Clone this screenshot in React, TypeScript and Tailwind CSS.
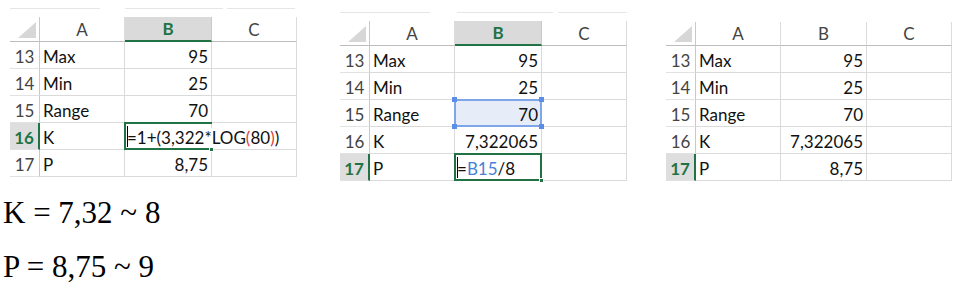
import React from 'react';

type Kind = 'plain' | 'editOverflow' | 'edit' | 'ref';
type Row = { n: number; a: string; b: React.ReactNode; kind?: Kind };

const RED = 'text-[#e0413c]';
const BLUE = 'text-[#4a7fd8]';

function Corner() {
  return (
    <div className="flex w-[30px] items-end justify-end border-r border-b border-r-[#c9c9c9] border-b-[#bdbdbd] pr-[3px] pb-[3px]">
      <svg width="18" height="16" viewBox="0 0 18 16">
        <polygon points="18,0 18,16 0,16" fill="#d7d7d7" />
      </svg>
    </div>
  );
}

function HeaderCell({ label, width, selected }: { label: string; width: string; selected?: boolean }) {
  return (
    <div
      className={`flex items-end justify-center pb-[2px] text-[17px] leading-[18px] ${width} ${
        selected
          ? 'border-r border-r-[#c9c9c9] border-b-2 border-b-[#217346] bg-[#dadada] font-bold text-[#217346]'
          : 'border-r border-b border-r-[#dcdcdc] border-b-[#bdbdbd] text-[#444]'
      }`}
    >
      {label}
    </div>
  );
}

function EditBox({ open }: { open?: boolean }) {
  return (
    <>
      <div
        className={`pointer-events-none absolute -top-px -right-px -bottom-px -left-px z-20 border-2 border-[#217346] ${
          open ? 'border-r-0' : ''
        }`}
      />
      <div className="absolute -right-[3px] -bottom-[3px] z-30 h-[5px] w-[5px] border border-white bg-[#217346]" />
      <div className="absolute top-[3px] left-[2px] z-30 h-[21px] w-px bg-black" />
    </>
  );
}

function RefBox() {
  return (
    <>
      <div className="pointer-events-none absolute -top-px -right-px -bottom-px -left-px z-20 border-2 border-[#7ea5e8]" />
      <div className="absolute -top-[3px] -left-[3px] z-30 h-[5px] w-[5px] bg-[#5b8ee6]" />
      <div className="absolute -top-[3px] -right-[3px] z-30 h-[5px] w-[5px] bg-[#5b8ee6]" />
      <div className="absolute -bottom-[3px] -left-[3px] z-30 h-[5px] w-[5px] bg-[#5b8ee6]" />
      <div className="absolute -right-[3px] -bottom-[3px] z-30 h-[5px] w-[5px] bg-[#5b8ee6]" />
    </>
  );
}

function Sheet({
  rows,
  selRow,
  selColB,
  headerH,
  colB,
}: {
  rows: Row[];
  selRow: number;
  selColB?: boolean;
  headerH: string;
  colB: string;
}) {
  return (
    <div className="flex flex-col font-[Lato,sans-serif]">
      <div className={`flex ${headerH}`}>
        <Corner />
        <HeaderCell label="A" width="w-[85px]" />
        <HeaderCell label="B" width={colB} selected={selColB} />
        <HeaderCell label="C" width="w-[85px]" />
      </div>
      {rows.map((r) => {
        const kind = r.kind ?? 'plain';
        const sel = r.n === selRow;
        return (
          <div key={r.n} className="flex h-[27px] text-[17px] leading-[20px] text-[#111]">
            <div
              className={`flex w-[30px] items-end justify-center border-b border-b-[#e2e2e2] pb-[1px] text-[17px] ${
                sel
                  ? 'border-r-2 border-r-[#217346] bg-[#dedede] font-bold text-[#217346]'
                  : 'border-r border-r-[#c9c9c9] text-[#444]'
              }`}
            >
              {r.n}
            </div>
            <div className="flex w-[85px] items-end border-r border-b border-[#dadada] px-[3px] pb-[1px]">{r.a}</div>
            <div
              className={`relative flex items-end justify-end border-r border-b border-[#dadada] px-[3px] pb-[1px] ${colB} ${
                kind === 'ref' ? 'bg-[#e6edf9]' : ''
              }`}
            >
              {kind === 'editOverflow' && (
                <>
                  <span className="absolute bottom-[1px] left-[2px] z-10 bg-white pr-[4px] whitespace-nowrap">{r.b}</span>
                  <EditBox open />
                </>
              )}
              {kind === 'edit' && (
                <>
                  <span className="absolute bottom-[1px] left-[2px] z-10 whitespace-nowrap">{r.b}</span>
                  <EditBox />
                </>
              )}
              {kind === 'ref' && (
                <>
                  {r.b}
                  <RefBox />
                </>
              )}
              {kind === 'plain' && r.b}
            </div>
            <div className="w-[85px] border-r border-b border-[#dadada]" />
          </div>
        );
      })}
    </div>
  );
}

function FormulaLine({ widths, gaps }: { widths: string[]; gaps: string[] }) {
  return (
    <div className="mb-[8px] flex h-px">
      <div className={`h-px bg-[#e6e6e6] ${widths[0]}`} />
      <div className={`h-px bg-[#e6e6e6] ${gaps[0]} ${widths[1]}`} />
      <div className={`h-px bg-[#e6e6e6] ${gaps[1]} ${widths[2]}`} />
    </div>
  );
}

const formulaK = (
  <>
    =1+(3,322*LOG<span className={RED}>(</span>80<span className={RED}>)</span>)
  </>
);

const formulaP = (
  <>
    =<span className={BLUE}>B15</span>/8
  </>
);

const rows1: Row[] = [
  { n: 13, a: 'Max', b: '95' },
  { n: 14, a: 'Min', b: '25' },
  { n: 15, a: 'Range', b: '70' },
  { n: 16, a: 'K', b: formulaK, kind: 'editOverflow' },
  { n: 17, a: 'P', b: '8,75' },
];

const rows2: Row[] = [
  { n: 13, a: 'Max', b: '95' },
  { n: 14, a: 'Min', b: '25' },
  { n: 15, a: 'Range', b: '70', kind: 'ref' },
  { n: 16, a: 'K', b: '7,322065' },
  { n: 17, a: 'P', b: formulaP, kind: 'edit' },
];

const rows3: Row[] = [
  { n: 13, a: 'Max', b: '95' },
  { n: 14, a: 'Min', b: '25' },
  { n: 15, a: 'Range', b: '70' },
  { n: 16, a: 'K', b: '7,322065' },
  { n: 17, a: 'P', b: '8,75' },
];

export default function App() {
  return (
    <div className="h-[300px] w-[971px] overflow-hidden bg-white">
      <div className="flex items-start">
        <div className="mt-[8px] ml-[10px]">
          <FormulaLine widths={['w-[90px]', 'w-[98px]', 'w-[68px]']} gaps={['ml-[25px]', 'ml-[4px]']} />
          <Sheet rows={rows1} selRow={16} selColB headerH="h-[25px]" colB="w-[87px]" />
        </div>
        <div className="mt-[12px] ml-[43px]">
          <FormulaLine widths={['w-[90px]', 'w-[96px]', 'w-[69px]']} gaps={['ml-[27px]', 'ml-[5px]']} />
          <Sheet rows={rows2} selRow={17} selColB headerH="h-[25px]" colB="w-[87px]" />
        </div>
        <div className="mt-[22px] ml-[39px]">
          <Sheet rows={rows3} selRow={17} headerH="h-[24px]" colB="w-[86px]" />
        </div>
      </div>
      <div className="mt-[5px] pl-[3px] font-['Liberation_Serif',serif] text-[31px] leading-[54px] text-black">
        <p>K = 7,32 ~ 8</p>
        <p>P = 8,75 ~ 9</p>
      </div>
    </div>
  );
}
